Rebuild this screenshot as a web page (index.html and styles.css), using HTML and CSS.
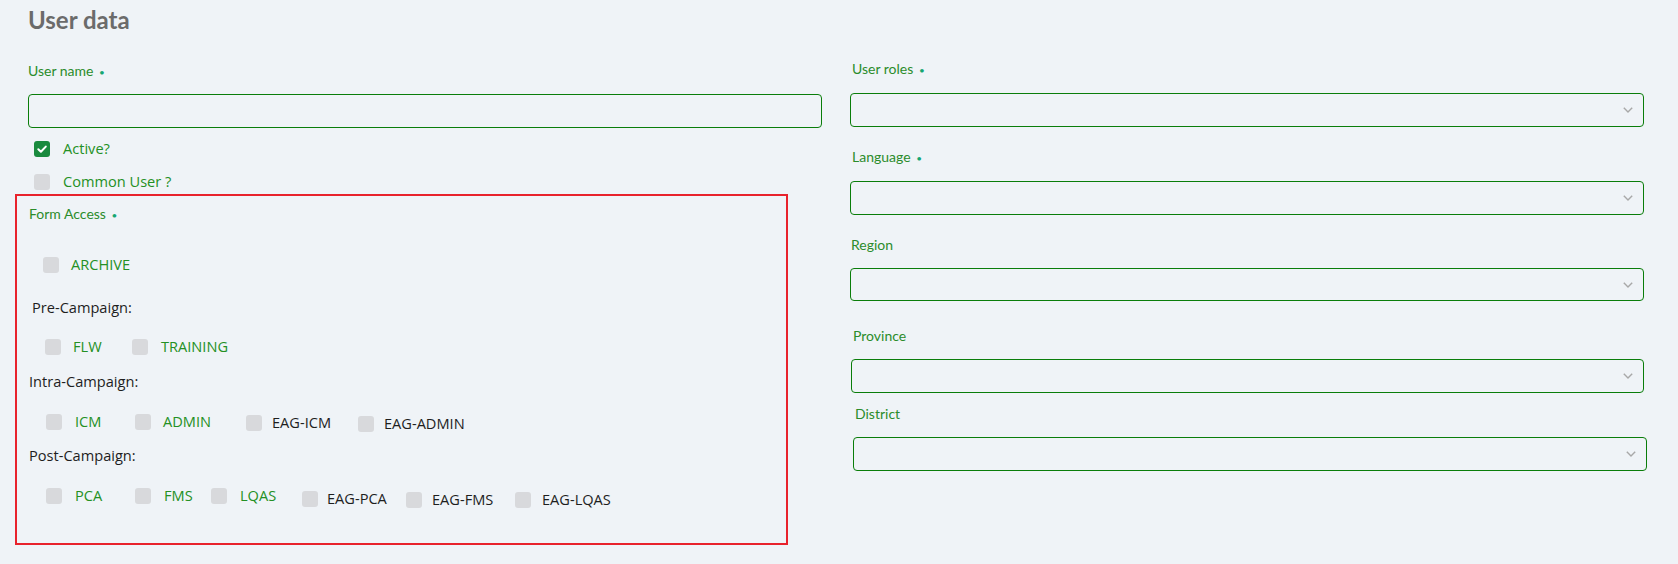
FILE: index.html
```html
<!DOCTYPE html>
<html lang="en">
<head>
<meta charset="utf-8">
<title>User data</title>
<link rel="stylesheet" href="styles.css">
</head>
<body>
<div class="page">
  <h1 class="title">User data</h1>
  <div class="cols">
    <div class="col col-left">
      <div class="field-label first">User name <span class="dot">•</span></div>
      <div class="text-input"></div>

      <div class="check-row active-row">
        <span class="cb checked"><svg viewBox="0 0 16 16" width="16" height="16"><path d="M4.3 8.3 L6.9 10.8 L11.8 5.6" fill="none" stroke="#fff" stroke-width="2" stroke-linecap="round" stroke-linejoin="round"/></svg></span>
        <span class="check-text">Active?</span>
      </div>
      <div class="check-row common-row">
        <span class="cb"></span>
        <span class="check-text">Common User ?</span>
      </div>

      <div class="form-access">
        <div class="field-label">Form Access <span class="dot">•</span></div>

        <div class="opt-row row-archive">
          <div class="opt"><span class="cb"></span><span class="opt-text">ARCHIVE</span></div>
        </div>

        <div class="section-title sec-pre">Pre-Campaign:</div>
        <div class="opt-row row-pre">
          <div class="opt w87"><span class="cb"></span><span class="opt-text">FLW</span></div>
          <div class="opt gap13"><span class="cb"></span><span class="opt-text">TRAINING</span></div>
        </div>

        <div class="section-title sec-intra">Intra-Campaign:</div>
        <div class="opt-row row-intra">
          <div class="opt w89 gap13"><span class="cb"></span><span class="opt-text">ICM</span></div>
          <div class="opt w111"><span class="cb"></span><span class="opt-text">ADMIN</span></div>
          <div class="opt w112 eag down1"><span class="cb"></span><span class="opt-text">EAG-ICM</span></div>
          <div class="opt eag down2"><span class="cb"></span><span class="opt-text">EAG-ADMIN</span></div>
        </div>

        <div class="section-title sec-post">Post-Campaign:</div>
        <div class="opt-row row-post">
          <div class="opt w89 gap13"><span class="cb"></span><span class="opt-text">PCA</span></div>
          <div class="opt w76 gap13"><span class="cb"></span><span class="opt-text">FMS</span></div>
          <div class="opt w91 gap13"><span class="cb"></span><span class="opt-text">LQAS</span></div>
          <div class="opt w104 eag gap9 down3"><span class="cb"></span><span class="opt-text">EAG-PCA</span></div>
          <div class="opt w109 eag down4"><span class="cb"></span><span class="opt-text">EAG-FMS</span></div>
          <div class="opt eag gap11 down4"><span class="cb"></span><span class="opt-text">EAG-LQAS</span></div>
        </div>
      </div>
    </div>

    <div class="col col-right">
      <div class="field-label r-roles">User roles <span class="dot">•</span></div>
      <div class="select s-roles"><svg class="chev" viewBox="0 0 10 6" width="10" height="6"><polyline points="0.8,0.8 5,5 9.2,0.8" fill="none" stroke="#a8a8a8" stroke-width="1.4"/></svg></div>

      <div class="field-label r-lang">Language <span class="dot">•</span></div>
      <div class="select s-lang"><svg class="chev" viewBox="0 0 10 6" width="10" height="6"><polyline points="0.8,0.8 5,5 9.2,0.8" fill="none" stroke="#a8a8a8" stroke-width="1.4"/></svg></div>

      <div class="field-label r-region">Region</div>
      <div class="select s-region"><svg class="chev" viewBox="0 0 10 6" width="10" height="6"><polyline points="0.8,0.8 5,5 9.2,0.8" fill="none" stroke="#a8a8a8" stroke-width="1.4"/></svg></div>

      <div class="field-label r-prov">Province</div>
      <div class="select s-prov"><svg class="chev" viewBox="0 0 10 6" width="10" height="6"><polyline points="0.8,0.8 5,5 9.2,0.8" fill="none" stroke="#a8a8a8" stroke-width="1.4"/></svg></div>

      <div class="field-label r-dist">District</div>
      <div class="select s-dist"><svg class="chev" viewBox="0 0 10 6" width="10" height="6"><polyline points="0.8,0.8 5,5 9.2,0.8" fill="none" stroke="#a8a8a8" stroke-width="1.4"/></svg></div>
    </div>
  </div>
</div>
</body>
</html>
```
FILE: styles.css
```css
html, body {
  margin: 0;
  padding: 0;
  background: #eff3f7;
}

.page {
  padding: 5px 0 0 28px;
  box-sizing: border-box;
  width: 1678px;
  height: 564px;
  overflow: hidden;
}

.title {
  margin: 0;
  font: 700 24px/30px Lato, "Liberation Sans", sans-serif;
  color: #6b6b6b;
}

.cols {
  display: grid;
  grid-template-columns: 794px 794px;
  column-gap: 28px;
  align-items: start;
}

.col {
  display: flex;
  flex-direction: column;
  align-items: flex-start;
}

.field-label {
  font: 400 14px/16px Lato, "Liberation Sans", sans-serif;
  color: #2b8c2b;
  white-space: nowrap;
}

.dot {
  color: #16a672;
  font-size: 10px;
  margin-left: 2px;
}

.field-label.first { margin-top: 28px; }

.text-input {
  box-sizing: border-box;
  width: 794px;
  height: 34px;
  margin-top: 14px;
  border: 1px solid #0a7d0a;
  border-radius: 4px;
}

.check-row {
  display: flex;
  align-items: center;
  height: 16px;
  gap: 13px;
  margin-left: 6px;
}

.active-row { margin-top: 13px; }
.common-row { margin-top: 17px; }

.cb {
  flex: none;
  display: block;
  width: 16px;
  height: 16px;
  border-radius: 3px;
  background: #d8d9dc;
}

.cb svg { display: block; }

.cb.checked { background: #198a3e; }

.check-text,
.opt-text {
  font: 400 14.6px/16px "Open Sans", "Noto Sans", sans-serif;
  color: #249024;
  white-space: nowrap;
  position: relative;
  top: -1px;
}

.form-access {
  box-sizing: border-box;
  margin-top: 4px;
  margin-left: -13px;
  width: 773px;
  height: 351px;
  border: 2px solid #e8222c;
  padding: 10px 0 0 12px;
  display: flex;
  flex-direction: column;
  align-items: flex-start;
}

.section-title {
  font: 400 14.6px/20px "Open Sans", "Noto Sans", sans-serif;
  color: #1e1e1e;
  white-space: nowrap;
}

.opt-row {
  display: flex;
  align-items: flex-start;
}

.opt {
  display: flex;
  align-items: center;
  gap: 12px;
  flex: none;
}

.opt.eag { gap: 10px; }
.opt.eag .opt-text { color: #1e1e1e; }
.opt.gap13 { gap: 13px; }
.opt.gap9 { gap: 9px; }
.opt.gap11 { gap: 11px; }

.w76 { width: 76px; }
.w87 { width: 87px; }
.w89 { width: 89px; }
.w91 { width: 91px; }
.w104 { width: 104px; }
.w109 { width: 109px; }
.w111 { width: 111px; }
.w112 { width: 112px; }

.down1 { margin-top: 1px; margin-bottom: -1px; }
.down2 { margin-top: 2px; margin-bottom: -2px; }
.down3 { margin-top: 3px; margin-bottom: -3px; }
.down4 { margin-top: 4px; margin-bottom: -4px; }

.row-archive { margin-top: 34px; margin-left: 14px; }
.sec-pre { margin-top: 24px; margin-left: 3px; }
.row-pre { margin-top: 22px; margin-left: 16px; }
.sec-intra { margin-top: 16px; margin-left: 0; }
.row-intra { margin-top: 23px; margin-left: 17px; }
.sec-post { margin-top: 15px; margin-left: 0; }
.row-post { margin-top: 23px; margin-left: 17px; }

.select {
  box-sizing: border-box;
  width: 794px;
  height: 34px;
  border: 1px solid #0a7d0a;
  border-radius: 4px;
  display: flex;
  align-items: center;
  justify-content: flex-end;
  padding-right: 10px;
}

.chev { display: block; }

.r-roles { margin-top: 26px; margin-left: 2px; }
.s-roles { margin-top: 15px; }
.r-lang { margin-top: 22px; margin-left: 2px; }
.s-lang { margin-top: 15px; }
.r-region { margin-top: 22px; margin-left: 1px; }
.s-region { margin-top: 15px; height: 33px; }
.r-prov { margin-top: 27px; margin-left: 3px; }
.s-prov { margin-top: 15px; margin-left: 1px; width: 793px; }
.r-dist { margin-top: 13px; margin-left: 5px; }
.s-dist { margin-top: 15px; margin-left: 3px; }
```
